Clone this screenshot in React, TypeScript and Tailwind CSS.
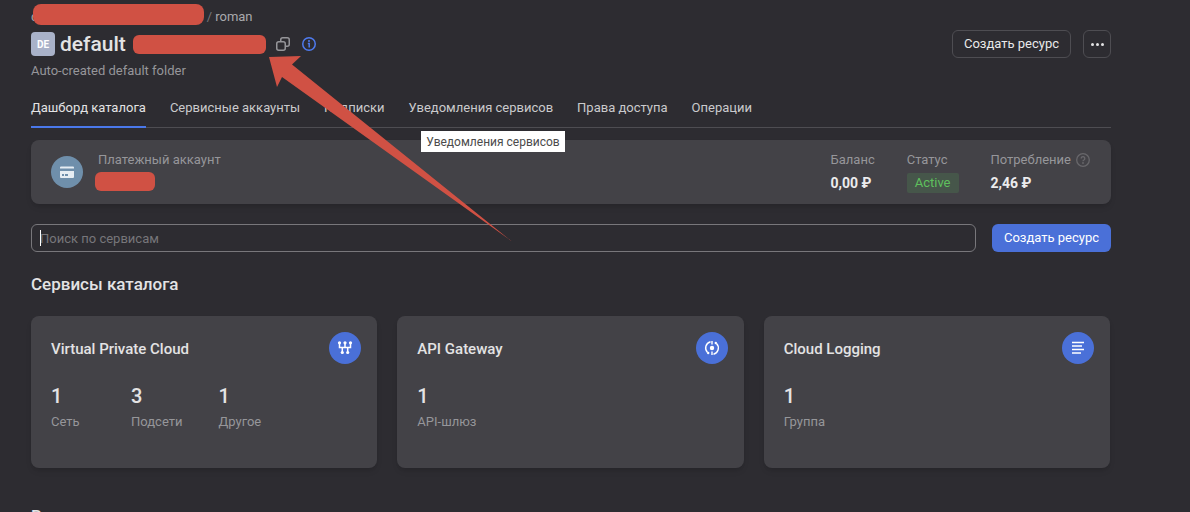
import type { ReactNode } from "react";

const tabs = [
  "Дашборд каталога",
  "Сервисные аккаунты",
  "Подписки",
  "Уведомления сервисов",
  "Права доступа",
  "Операции",
];

type Service = {
  title: string;
  icon: ReactNode;
  stats: { value: number; label: string }[];
};

const services: Service[] = [
  {
    title: "Virtual Private Cloud",
    icon: <VpcIcon />,
    stats: [
      { value: 1, label: "Сеть" },
      { value: 3, label: "Подсети" },
      { value: 1, label: "Другое" },
    ],
  },
  {
    title: "API Gateway",
    icon: <GatewayIcon />,
    stats: [{ value: 1, label: "API-шлюз" }],
  },
  {
    title: "Cloud Logging",
    icon: <LoggingIcon />,
    stats: [{ value: 1, label: "Группа" }],
  },
];

function VpcIcon() {
  return (
    <svg viewBox="0 0 16 16" className="size-4" fill="currentColor" aria-hidden="true">
      <path
        d="M2.5 3v4.5h11V3M8 3v4.5M5.3 7.5V12M10.7 7.5V12"
        fill="none"
        stroke="currentColor"
        strokeWidth="1.5"
      />
      <circle cx="2.5" cy="2.8" r="1.6" />
      <circle cx="8" cy="2.8" r="1.6" />
      <circle cx="13.5" cy="2.8" r="1.6" />
      <circle cx="5.3" cy="12.5" r="1.6" />
      <circle cx="10.7" cy="12.5" r="1.6" />
    </svg>
  );
}

function GatewayIcon() {
  return (
    <svg viewBox="0 0 16 16" className="size-4" fill="none" stroke="currentColor" strokeWidth="1.4" aria-hidden="true">
      <path d="M6.5 1.8A6.400 6.400 0 0 0 3.500 12.500" />
      <path d="M9.5 14.200A6.400 6.400 0 0 0 12.500 3.500" />
      <path d="M8 1v3.500M8 11.500V15" />
      <circle cx="8" cy="8" r="2.200" fill="currentColor" stroke="none" />
      <circle cx="11.800" cy="3" r="1.200" fill="currentColor" stroke="none" />
      <circle cx="4.200" cy="13" r="1.200" fill="currentColor" stroke="none" />
    </svg>
  );
}

function LoggingIcon() {
  return (
    <svg viewBox="0 0 16 16" className="size-4" stroke="currentColor" strokeWidth="1.5" aria-hidden="true">
      <path d="M2 2.500h12M2 6h10M2 9.500h12M2 13h9" />
    </svg>
  );
}

function CardIcon() {
  return (
    <svg viewBox="0 0 16 16" className="size-4" fill="currentColor" aria-hidden="true">
      <path d="M2 2.500h12a1 1 0 0 1 1 1V4.500H1V3.500a1 1 0 0 1 1-1Z" />
      <path
        fillRule="evenodd"
        d="M1 7h14V13a1 1 0 0 1-1 1H2a1 1 0 0 1-1-1V7Zm2 3v2h2v-2H3Zm3 0v2h3v-2H6Z"
      />
    </svg>
  );
}

function CopyIcon() {
  return (
    <svg viewBox="0 0 16 16" className="size-4" fill="none" stroke="currentColor" strokeWidth="1.5" aria-hidden="true">
      <rect x="1.75" y="5.75" width="8.5" height="8.5" rx="2" />
      <path d="M5.750 5.500V3.750a2 2 0 0 1 2-2h4.500a2 2 0 0 1 2 2v4.500a2 2 0 0 1-2 2H10.500" />
    </svg>
  );
}

function InfoIcon() {
  return (
    <svg viewBox="0 0 16 16" className="size-4" fill="none" stroke="currentColor" strokeWidth="1.5" aria-hidden="true">
      <circle cx="8" cy="8" r="6.25" />
      <path d="M6.800 7.500H8.200V11.500" />
      <circle cx="8" cy="5" r="1" fill="currentColor" stroke="none" />
    </svg>
  );
}

function HelpIcon() {
  return (
    <svg viewBox="0 0 16 16" className="size-4" fill="none" stroke="currentColor" strokeWidth="1.3" aria-hidden="true">
      <circle cx="8" cy="8" r="6.3" />
      <path d="M6.200 6.400a1.800 1.800 0 1 1 2.700 1.600c-.6.300-.9.600-.9 1.200" />
      <circle cx="8" cy="11" r=".9" fill="currentColor" stroke="none" />
    </svg>
  );
}

function Metric({ label, children }: { label: ReactNode; children: ReactNode }) {
  return (
    <div>
      <dt className="flex h-5 items-center gap-1 text-[#96969a]">{label}</dt>
      <dd className="mt-[3px] flex h-5 items-center text-sm font-bold text-[#ececed]">
        {children}
      </dd>
    </div>
  );
}

function ServiceCard({ title, icon, stats }: Service) {
  return (
    <article className="h-[152px] rounded-lg bg-[#434247] px-5 pt-4 shadow-md">
      <div className="-mr-1 flex items-center justify-between">
        <h3 className="pt-0.5 text-[15px] font-medium">{title}</h3>
        <span className="flex size-8 items-center justify-center rounded-full bg-[#4a70d8] text-white">
          {icon}
        </span>
      </div>
      <dl className="mt-[18px] flex gap-9">
        {stats.map((stat) => (
          <div key={stat.label} className="flex min-w-11 flex-col-reverse">
            <dt className="leading-6 text-[#96969a]">{stat.label}</dt>
            <dd className="text-xl leading-7 font-medium">{stat.value}</dd>
          </div>
        ))}
      </dl>
    </article>
  );
}

export default function App() {
  return (
    <div className="relative h-screen overflow-hidden bg-[#2d2c31] pr-[79px] pl-[31px] font-[Roboto,'Noto_Sans',sans-serif] text-[13px] text-[#e3e3e4]">
      <header className="flex items-start justify-between">
        <div>
          <nav aria-label="Путь" className="flex h-8 items-center pt-px text-[#a9a9ac]">
            <a href="#cloud">c</a>
            <span className="relative mt-[3px] -ml-[5px] h-[21px] w-[171px] self-start rounded-lg bg-[#d05144]" />
            <span className="mx-[3px] text-[#77777b]">/</span>
            <a href="#roman">roman</a>
          </nav>
          <div className="flex h-6 items-center">
            <span className="flex size-6 items-center justify-center rounded-sm bg-[#a9b2c9] text-[10px] font-bold text-white">
              DE
            </span>
            <h1 className="ml-[5px] text-[21px] leading-6 font-medium">default</h1>
            <span className="ml-[7px] h-[19px] w-[133px] rounded-md bg-[#d05144]" />
            <button type="button" aria-label="Скопировать" className="ml-[9px] text-[#96969a]">
              <CopyIcon />
            </button>
            <button type="button" aria-label="Информация" className="ml-2.5 text-[#4f7bef]">
              <InfoIcon />
            </button>
          </div>
          <p className="mt-[5px] leading-5 text-[#96969a]">Auto-created default folder</p>
        </div>
        <div className="mt-[30px] flex gap-3">
          <button
            type="button"
            className="h-7 w-[119px] rounded-md border border-[#4e4d52] text-[#e9e9ea]"
          >
            Создать ресурс
          </button>
          <button
            type="button"
            aria-label="Ещё"
            className="flex size-7 items-center justify-center gap-0.5 rounded-md border border-[#4e4d52]"
          >
            <span className="size-[3px] rounded-full bg-[#e3e3e4]" />
            <span className="size-[3px] rounded-full bg-[#e3e3e4]" />
            <span className="size-[3px] rounded-full bg-[#e3e3e4]" />
          </button>
        </div>
      </header>

      <nav aria-label="Разделы каталога" className="mt-[7px] flex h-10 gap-6 border-b border-[#4e4d52]">
        {tabs.map((tab, i) => (
          <a
            key={tab}
            href="#tab"
            aria-current={i === 0 ? "page" : undefined}
            className={`flex h-10 items-center border-b-2 pt-0.5 ${
              i === 0 ? "border-[#4a78ea]" : "border-transparent text-[#cacacc]"
            }`}
          >
            {tab}
          </a>
        ))}
      </nav>

      <section className="mt-3 flex h-16 items-center rounded-lg bg-[#434247] px-5 shadow-md">
        <span className="flex size-8 items-center justify-center rounded-full bg-[#6f8fab] text-[#e6edf3]">
          <CardIcon />
        </span>
        <div className="mt-2.5 ml-3 self-start">
          <div className="ml-[3px] leading-5 text-[#96969a]">Платежный аккаунт</div>
          <div className="mt-0.5 h-[19px] w-[60px] rounded-md bg-[#d05144]" />
        </div>
        <dl className="mt-2.5 ml-auto flex gap-8 self-start">
          <Metric label="Баланс">0,00 ₽</Metric>
          <Metric label="Статус">
            <span className="flex h-5 items-center rounded-xs bg-[#46564a] px-2 text-[13px] font-normal text-[#5fc05d]">
              Active
            </span>
          </Metric>
          <Metric
            label={
              <>
                Потребление
                <span className="text-[#68676b]">
                  <HelpIcon />
                </span>
              </>
            }
          >
            2,46 ₽
          </Metric>
        </dl>
      </section>

      <form className="mt-5 flex gap-4">
        <div className="relative flex-1">
          <input
            type="text"
            aria-label="Поиск по сервисам"
            placeholder="Поиск по сервисам"
            className="block h-7 w-full rounded-md border border-[#78777b] px-2 placeholder:text-[#77767a] focus:outline-none"
          />
          <span className="absolute top-1.5 left-[9px] h-4 w-px bg-white" />
        </div>
        <button type="button" className="h-7 w-[119px] rounded-md bg-[#4a70d8] text-white">
          Создать ресурс
        </button>
      </form>

      <h2 className="mt-5 text-[17px] leading-6 font-medium">Сервисы каталога</h2>
      <div className="mt-5 mr-px grid grid-cols-3 gap-5">
        {services.map((service) => (
          <ServiceCard key={service.title} {...service} />
        ))}
      </div>
      <h2 className="mt-9 text-[17px] leading-6 font-medium">Все сервисы</h2>

      <div
        role="tooltip"
        className="absolute top-[131px] left-[421px] flex h-[21px] w-36 items-center justify-center bg-white text-xs text-[#4b4b4b]"
      >
        Уведомления сервисов
      </div>
      <svg
        viewBox="0 0 243 186"
        className="pointer-events-none absolute top-14 left-[269px] h-[186px] w-[243px]"
        fill="#d05144"
        aria-hidden="true"
      >
        <path d="M0 1 32 0 23 8.500 243 185.500 13 21 8 31Z" />
      </svg>
    </div>
  );
}
